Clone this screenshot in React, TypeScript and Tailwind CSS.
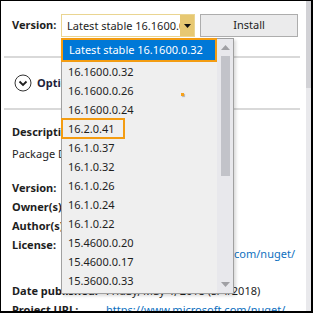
import React from "react";

const items = [
  "16.1600.0.32",
  "16.1600.0.26",
  "16.1600.0.24",
  "16.2.0.41",
  "16.1.0.37",
  "16.1.0.32",
  "16.1.0.26",
  "16.1.0.24",
  "16.1.0.22",
  "15.4600.0.20",
  "15.4600.0.17",
  "15.3600.0.33",
];

function Row({ label, value, link, wide }: { label: string; value: string; link?: boolean; wide?: boolean }) {
  return (
    <div className="flex h-[19px] leading-[19px]">
      <div className={(wide ? "w-[94px]" : "w-[86px]") + " font-bold whitespace-nowrap"}>{label}</div>
      <div className={"flex-1 whitespace-nowrap " + (link ? "text-[#0e70c0]" : "")}>{value}</div>
    </div>
  );
}

export default function App() {
  return (
    <div className="w-[313px] h-[313px] flex bg-white border-l border-t border-r-2 border-b-2 border-black overflow-hidden font-['Noto_Sans',sans-serif] text-[11px] text-[#1e1e1e]">
      <div className="relative flex-1 h-full overflow-hidden">
        {/* Version row */}
        <div className="flex items-center mt-[13px] ml-[11px] h-[23px]">
          <div className="w-[49px] font-bold">Version:</div>
          <div className="w-[134px] h-[23px] flex border border-[#ead591] bg-white">
            <div className="flex-1 overflow-hidden whitespace-nowrap pl-[5px] leading-[21px]">
              Latest stable 16.1600.0.32
            </div>
            <div className="w-[14px] h-full bg-[#e7c872] flex items-center justify-center">
              <svg width="7" height="4" viewBox="0 0 7 4">
                <path d="M0 0 H7 L3.5 4 Z" fill="#111" />
              </svg>
            </div>
          </div>
          <div className="ml-[5px] w-[98px] h-[23px] bg-[#ebebec] border border-[#adadad] flex items-center justify-center">
            Install
          </div>
        </div>

        <div className="mt-[19px] ml-[3px] w-[296px] h-[2px] bg-[#d9d9d9]" />

        {/* Options */}
        <div className="h-[50px] flex items-center pl-[13px]">
          <svg width="18" height="18" viewBox="0 0 18 18">
            <circle cx="9" cy="9" r="8" fill="none" stroke="#333" strokeWidth="1" />
            <path d="M5.5 7.5 L9 11 L12.5 7.5" fill="none" stroke="#1e1e1e" strokeWidth="1.8" />
          </svg>
          <span className="ml-[5px] font-bold text-[#1e1e3a]">Options</span>
        </div>

        <div className="ml-[3px] w-[296px] h-[2px] bg-[#d9d9d9]" />

        {/* Details */}
        <div className="pl-[11px]">
          <div className="mt-[11.5px] h-[19px] leading-[19px] font-bold">Description</div>
          <div className="mt-[3px] h-[19px] leading-[19px]">Package Description</div>
          <div className="mt-[15px]">
            <Row label="Version:" value="16.1600.0.32" />
            <Row label="Owner(s):" value="microsoft" />
            <Row label="Author(s):" value="Microsoft" />
            <div className="flex h-[28px]">
              <div className="w-[86px] h-[19px] leading-[19px] font-bold">License:</div>
              <div className="flex-1 mt-[9px] h-[19px] leading-[19px] text-right pr-[11px] whitespace-nowrap text-[#0e70c0]">
                https://www.microsoft.com/nuget/
              </div>
            </div>
            <div className="mt-[18px]">
              <Row wide label="Date published:" value="Friday, May 4, 2018 (5/4/2018)" />
              <Row wide label="Project URL:" value="https://www.microsoft.com/nuget/" link />
            </div>
          </div>
        </div>

        {/* Dropdown list */}
        <div className="absolute left-[60px] top-[37px] w-[173px] h-[256px] bg-[#efefef] border border-[#a0a0a0] flex shadow-[2px_2px_3px_rgba(0,0,0,0.15)]">
          <div className="w-[155px] h-full">
            <div className="-ml-[1px] -mt-[1px] w-[156px] h-[24px] bg-[#0078d7] border-2 border-[#f39c12] text-white pl-[6px] leading-[20px] whitespace-nowrap">
              Latest stable 16.1600.0.32
            </div>
            {items.map((it) =>
              it === "16.2.0.41" ? (
                <div
                  key={it}
                  className="-ml-[1px] -my-[1px] w-[64px] h-[21px] border-2 border-[#f39c12] pl-[5px] leading-[17px]"
                >
                  {it}
                </div>
              ) : (
                <div key={it} className="h-[19px] leading-[19px] pl-[6px]">
                  {it}
                </div>
              )
            )}
          </div>
          <div className="w-[16px] h-full bg-[#e8e8ec] flex flex-col items-center">
            <div className="h-[17px] flex items-center justify-center">
              <svg width="9" height="5" viewBox="0 0 9 5">
                <path d="M0 5 L4.5 0 L9 5 Z" fill="#a0a0a4" />
              </svg>
            </div>
            <div className="w-[9px] h-[120px] bg-[#c2c3c9]" />
            <div className="flex-1" />
            <div className="h-[17px] flex items-center justify-center">
              <svg width="9" height="5" viewBox="0 0 9 5">
                <path d="M0 0 H9 L4.5 5 Z" fill="#a0a0a4" />
              </svg>
            </div>
          </div>
          <div className="absolute left-[119px] top-[54px] w-[3px] h-[3px] bg-[#f7a11a] shadow-[1px_1px_1px_rgba(0,0,0,0.25)]" />
        </div>
      </div>
      <div className="w-[5px] h-full bg-[#e9e9ec]">
        <div className="h-[87px] bg-[#d2d2d6]" />
      </div>
    </div>
  );
}
